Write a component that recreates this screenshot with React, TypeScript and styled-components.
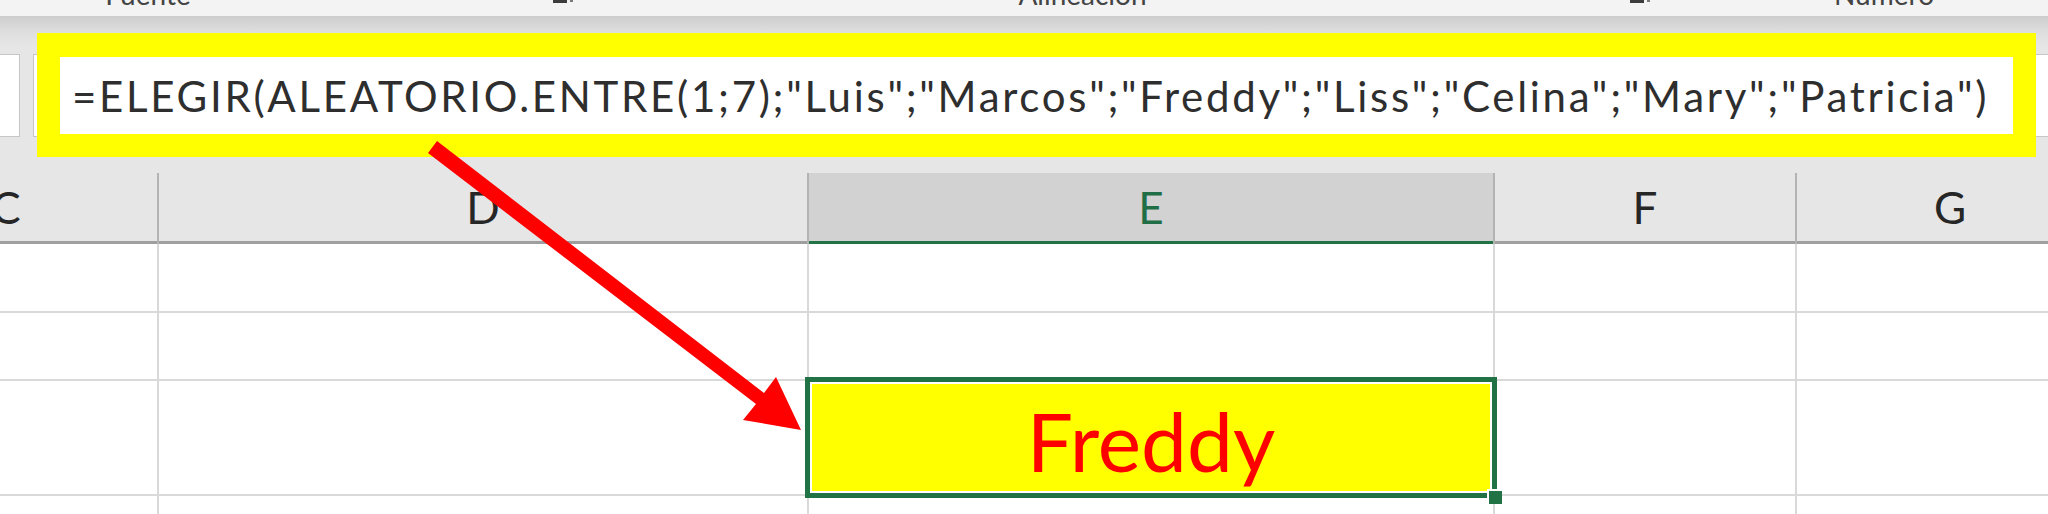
import styled, { createGlobalStyle } from 'styled-components';

const GlobalStyle = createGlobalStyle`
  html, body {
    margin: 0;
    padding: 0;
    background: #ffffff;
  }
`;

const Page = styled.div`
  position: relative;
  width: 2048px;
  height: 514px;
  overflow: hidden;
  background: #ffffff;
  font-family: Lato, 'Open Sans', sans-serif;
`;

const Ribbon = styled.div`
  height: 16px;
  background: #f3f3f3;
  display: grid;
  grid-template-columns: 60px 176px 317px 20px 426px 167px 464px 20px 150px 168px;
  overflow: hidden;
`;

const GroupLabel = styled.div`
  font-size: 28px;
  line-height: 1;
  margin-top: -20px;
  color: #444444;
  text-align: center;
  white-space: nowrap;
`;

const Launcher = styled.svg`
  display: block;
`;

const FormulaArea = styled.div`
  height: 157px;
  box-sizing: border-box;
  padding: 17px 0 16px;
  background: linear-gradient(to bottom, #cdcdcd 0px, #dfdfdf 17px, #e6e6e6 30px, #e6e6e6 100%);
  display: flex;
  align-items: center;
`;

const NameBox = styled.div`
  width: 20px;
  height: 83px;
  background: #ffffff;
  border: 1px solid #c6c6c6;
  border-left: none;
  box-sizing: border-box;
  flex-shrink: 0;
`;

const FormulaEdge = styled.div`
  width: 4px;
  height: 83px;
  margin-left: 13px;
  background: #ffffff;
  border: 1px solid #c6c6c6;
  border-right: none;
  box-sizing: border-box;
  flex-shrink: 0;
`;

const Highlight = styled.div`
  width: 1999px;
  height: 124px;
  box-sizing: border-box;
  border: 23px solid #ffff00;
  border-top-width: 24px;
  background: #ffffff;
  flex-shrink: 0;
  display: flex;
  align-items: center;
  padding-left: 12px;
`;

const FormulaText = styled.div`
  font-size: 42px;
  line-height: 77px;
  letter-spacing: 2.7px;
  padding-top: 2px;
  color: #2e2e2e;
  white-space: nowrap;
`;

const FormulaTail = styled.div`
  flex: 1;
  height: 83px;
  background: #ffffff;
  border-top: 1px solid #c6c6c6;
  border-bottom: 1px solid #c6c6c6;
  box-sizing: border-box;
`;

const COLS = '302px 648px 684px 300px 306px';

const HeaderRow = styled.div`
  display: grid;
  grid-template-columns: ${COLS};
  column-gap: 2px;
  margin-left: -145px;
  background: #e6e6e6;
`;

const ColHeader = styled.div<{ $active?: boolean }>`
  height: 71px;
  box-sizing: border-box;
  border-bottom: 3px solid ${(p) => (p.$active ? '#217346' : '#9f9f9f')};
  box-shadow: 2px 0 0 0 #b3b3b3;
  background: ${(p) => (p.$active ? '#d2d2d2' : '#e6e6e6')};
  color: ${(p) => (p.$active ? '#1f6e45' : '#262626')};
  font-size: 44px;
  line-height: 68px;
  text-align: center;
`;

const SheetBody = styled.div`
  display: grid;
  grid-template-columns: ${COLS};
  grid-template-rows: 67px 66px 113px 40px;
  gap: 2px;
  margin-left: -145px;
  background: #d9d9d9;
`;

const Cell = styled.div`
  background: #ffffff;
`;

const SelectedCell = styled.div`
  position: relative;
  z-index: 1;
  background: #ffff00;
  outline: 5px solid #217346;
  outline-offset: -1px;
  box-shadow: inset 0 0 0 3px #ffffff;
  display: flex;
  align-items: flex-end;
  justify-content: center;
  padding-bottom: 13px;
  box-sizing: border-box;
`;

const CellValue = styled.span`
  font-size: 82px;
  line-height: 1;
  color: #ff0000;
`;

const FillHandle = styled.span`
  position: absolute;
  right: -9px;
  bottom: -10px;
  width: 13px;
  height: 13px;
  background: #217346;
  border: 2px solid #ffffff;
  border-right: none;
  border-bottom: none;
`;

const Overlay = styled.svg`
  position: absolute;
  left: 0;
  top: 0;
  pointer-events: none;
  z-index: 5;
`;

const FORMULA =
  '=ELEGIR(ALEATORIO.ENTRE(1;7);"Luis";"Marcos";"Freddy";"Liss";"Celina";"Mary";"Patricia")';

const HEADERS = ['C', 'D', 'E', 'F', 'G'];

function DialogLauncher() {
  return (
    <Launcher width="20" height="16" viewBox="0 0 20 16">
      <rect x="0" y="0" width="14" height="3" fill="#3c3c3c" />
      <rect x="17" y="0" width="3" height="2" fill="#7a7a7a" />
    </Launcher>
  );
}

// arrow from the formula bar down to the result cell
const ARROW = '428,153 437,141 764,393 776,377 801,430 743,420 756,404';

export default function App() {
  const rows = [0, 1, 2, 3];
  return (
    <Page>
      <GlobalStyle />
      <Ribbon>
        <span />
        <GroupLabel>Fuente</GroupLabel>
        <span />
        <DialogLauncher />
        <span />
        <GroupLabel>Alineación</GroupLabel>
        <span />
        <DialogLauncher />
        <span />
        <GroupLabel>Número</GroupLabel>
      </Ribbon>

      <FormulaArea>
        <NameBox />
        <FormulaEdge />
        <Highlight>
          <FormulaText>{FORMULA}</FormulaText>
        </Highlight>
        <FormulaTail />
      </FormulaArea>

      <HeaderRow>
        {HEADERS.map((h) => (
          <ColHeader key={h} $active={h === 'E'}>
            {h}
          </ColHeader>
        ))}
      </HeaderRow>

      <SheetBody>
        {rows.map((r) =>
          HEADERS.map((h) =>
            r === 2 && h === 'E' ? (
              <SelectedCell key={h + r}>
                <CellValue>Freddy</CellValue>
                <FillHandle />
              </SelectedCell>
            ) : (
              <Cell key={h + r} />
            )
          )
        )}
      </SheetBody>

      <Overlay width="2048" height="514" viewBox="0 0 2048 514">
        <polygon points={ARROW} fill="#ff0000" />
      </Overlay>
    </Page>
  );
}
